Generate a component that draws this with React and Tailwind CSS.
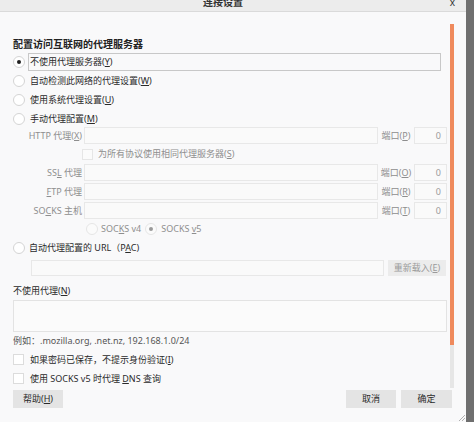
import React from 'react';

const font = { fontFamily: '"Noto Sans", "Noto Sans CJK SC", sans-serif' };

function Key({ k }) {
    return (
        <span>
            (<span className="underline">{k}</span>)
        </span>
    );
}

function Radio({ checked, disabled }) {
    return (
        <span
            className={`flex items-center justify-center w-[12px] h-[12px] rounded-full border shrink-0 ${
                disabled ? 'border-[#e6e6e6] bg-[#fbfbfb]' : 'border-[#d4d4d4] bg-white'
            }`}
        >
            {checked && (
                <span className={`w-[4px] h-[4px] rounded-full ${disabled ? 'bg-[#9a9a9a]' : 'bg-[#202020]'}`} />
            )}
        </span>
    );
}

function Checkbox({ disabled }) {
    return (
        <span
            className={`w-[11px] h-[11px] border shrink-0 ${
                disabled ? 'border-[#e6e6e6] bg-[#fbfbfb]' : 'border-[#dcdcdc] bg-white'
            }`}
        />
    );
}

function ProxyRow({ label, port, className = '' }) {
    return (
        <div className={`flex items-center h-[17px] ${className}`}>
            <div className="w-[71px] text-right pr-[2px] text-[#8e8e8e] whitespace-nowrap">{label}</div>
            <div className="w-[294px] h-[17px] border border-[#e8e8e8] bg-[#fafafa]" />
            <div className="w-[36px] text-center text-[#8e8e8e] whitespace-nowrap">
                端口<Key k={port} />
            </div>
            <div className="w-[33px] h-[17px] border border-[#e8e8e8] bg-[#fafafa] text-right pr-[5px] text-[#9a9a9a] leading-[15px]">
                0
            </div>
        </div>
    );
}

function RadioRow({ checked, focused, children }) {
    return (
        <div className="flex items-center h-[19px]">
            <Radio checked={checked} />
            <div
                className={`ml-[3px] flex items-center h-[18px] pl-[1px] ${
                    focused ? 'w-[413px] border border-[#c8c8c8]' : 'border border-transparent'
                }`}
            >
                {children}
            </div>
        </div>
    );
}

export default function App() {
    return (
        <div className="w-[474px] h-[422px] overflow-hidden flex bg-[#6f6f6f] text-[9px] text-[#2a2a2a]" style={font}>
            <div className="w-[466px] h-full flex flex-col bg-[#f9f9fa]">
                {/* title bar */}
                <div className="h-[12px] shrink-0 flex items-start bg-[#ececec] border-b border-[#dadada] relative">
                    <div className="w-full text-center -mt-[3px] text-[10px] font-bold text-[#333] leading-[10px] pr-[20px]">连接设置</div>
                    <div className="absolute right-[11px] -top-[3px] text-[10px] leading-[10px] text-[#333]">x</div>
                </div>

                <div className="flex flex-1">
                    {/* content */}
                    <div className="w-[450px] pl-[13px] flex flex-col">
                        <div className="mt-[24px] h-[16px] flex items-center text-[10px] font-bold text-[#222]">
                            配置访问互联网的代理服务器
                        </div>
                        <RadioRow checked focused>
                            不使用代理服务器<Key k="Y" />
                        </RadioRow>
                        <RadioRow>
                            自动检测此网络的代理设置<Key k="W" />
                        </RadioRow>
                        <RadioRow>
                            使用系统代理设置<Key k="U" />
                        </RadioRow>
                        <RadioRow>
                            手动代理配置<Key k="M" />
                        </RadioRow>

                        <ProxyRow label={<>HTTP 代理<Key k="X" /></>} port="P" className="-mt-[1px]" />
                        <div className="flex items-center h-[20px] pl-[69px] text-[#8e8e8e]">
                            <Checkbox disabled />
                            <span className="ml-[5px]">
                                为所有协议使用相同代理服务器<Key k="S" />
                            </span>
                        </div>
                        <ProxyRow label={<>SS<span className="underline">L</span> 代理</>} port="O" />
                        <ProxyRow label={<><span className="underline">F</span>TP 代理</>} port="R" className="mt-[2px]" />
                        <ProxyRow label={<>SO<span className="underline">C</span>KS 主机</>} port="T" className="mt-[2px]" />

                        <div className="flex items-center h-[19px] pl-[73px] text-[#8e8e8e]">
                            <Radio disabled />
                            <span className="ml-[3px]">
                                SOC<span className="underline">K</span>S v4
                            </span>
                            <span className="ml-[4px]">
                                <Radio checked disabled />
                            </span>
                            <span className="ml-[4px]">
                                SOCKS <span className="underline">v</span>5
                            </span>
                        </div>

                        <div className="flex items-center h-[19px]">
                            <Radio />
                            <span className="ml-[4px]">
                                自动代理配置的 URL（P<span className="underline">A</span>C)
                            </span>
                        </div>

                        <div className="flex items-center mt-[3px] h-[16px]">
                            <div className="ml-[18px] w-[353px] h-[16px] border border-[#e8e8e8] bg-[#fafafa]" />
                            <div className="ml-[4px] w-[58px] h-[16px] bg-[#ececec] text-[#9a9a9a] flex items-center justify-center">
                                重新载入<Key k="E" />
                            </div>
                        </div>

                        <div className="mt-[6px] h-[18px] flex items-center">
                            不使用代理<Key k="N" />
                        </div>
                        <div className="w-[434px] h-[32px] border border-[#e3e3e3] bg-[#fbfbfb]" />
                        <div className="h-[18px] flex items-center text-[#555]">
                            例如：.mozilla.org, .net.nz, 192.168.1.0/24
                        </div>
                        <div className="flex items-center h-[19px]">
                            <Checkbox />
                            <span className="ml-[6px]">
                                如果密码已保存，不提示身份验证<Key k="I" />
                            </span>
                        </div>
                        <div className="flex items-center h-[19px]">
                            <Checkbox />
                            <span className="ml-[6px]">
                                使用 SOCKS v5 时代理 <span className="underline">D</span>NS 查询
                            </span>
                        </div>
                    </div>

                    {/* scrollbar */}
                    <div className="w-[4px] mt-[12px] mb-[2px] flex flex-col">
                        <div className="h-[321px] bg-[#ef8a5d]" />
                        <div className="flex-1 bg-[#e6e6e6]" />
                    </div>
                </div>

                {/* buttons */}
                <div className="h-[32px] shrink-0 flex items-start pl-[13px] pr-[14px] relative">
                    <button className="w-[50px] h-[18px] bg-[#e4e4e4] text-[#2a2a2a]">
                        帮助<Key k="H" />
                    </button>
                    <div className="flex-1" />
                    <button className="w-[50px] h-[18px] bg-[#e4e4e4] text-[#2a2a2a]">取消</button>
                    <button className="ml-[5px] w-[51px] h-[18px] bg-[#e4e4e4] text-[#2a2a2a]">确定</button>
                    <svg className="absolute right-0 bottom-0" width="9" height="9" viewBox="0 0 9 9">
                        <path d="M8 2 L2 8 M8 5 L5 8" stroke="#b0b0b0" strokeWidth="1" />
                    </svg>
                </div>
            </div>
            <div className="w-[8px] h-full bg-[#6f6f6f]" />
        </div>
    );
}
